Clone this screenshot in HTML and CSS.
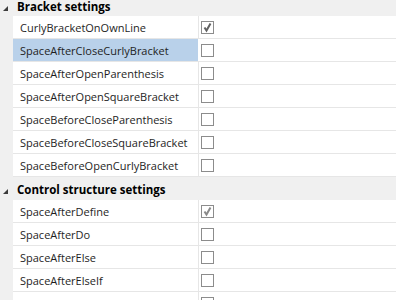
FILE: index.html
```html
<!DOCTYPE html>
<html lang="en">
<head>
    <meta charset="UTF-8">
    <title>Property grid</title>
    <link rel="stylesheet" href="styles.css">
</head>
<body>
    <div class="grid">
        <!-- Bracket settings -->
        <div class="category first">
            <svg class="expander" width="6" height="6" viewBox="0 0 6 6"><polygon points="0,6 6,6 6,0"/></svg>
            <span>Bracket settings</span>
        </div>
        <div class="row">
            <div class="name">CurlyBracketOnOwnLine</div>
            <div class="value"><span class="check on"><svg width="11" height="11" viewBox="0 0 11 11"><path d="M2.5 5.5 L4.5 8.5 L8.5 1.5"/></svg></span></div>
        </div>
        <div class="row selected">
            <div class="name">SpaceAfterCloseCurlyBracket</div>
            <div class="value"><span class="check"></span></div>
        </div>
        <div class="row">
            <div class="name">SpaceAfterOpenParenthesis</div>
            <div class="value"><span class="check"></span></div>
        </div>
        <div class="row">
            <div class="name">SpaceAfterOpenSquareBracket</div>
            <div class="value"><span class="check"></span></div>
        </div>
        <div class="row">
            <div class="name">SpaceBeforeCloseParenthesis</div>
            <div class="value"><span class="check"></span></div>
        </div>
        <div class="row">
            <div class="name">SpaceBeforeCloseSquareBracket</div>
            <div class="value"><span class="check"></span></div>
        </div>
        <div class="row">
            <div class="name">SpaceBeforeOpenCurlyBracket</div>
            <div class="value"><span class="check"></span></div>
        </div>

        <!-- Control structure settings -->
        <div class="category">
            <svg class="expander" width="6" height="6" viewBox="0 0 6 6"><polygon points="0,6 6,6 6,0"/></svg>
            <span>Control structure settings</span>
        </div>
        <div class="row">
            <div class="name">SpaceAfterDefine</div>
            <div class="value"><span class="check on light"><svg width="11" height="11" viewBox="0 0 11 11"><path d="M2.5 5.5 L4.5 8.5 L8.5 1.5"/></svg></span></div>
        </div>
        <div class="row">
            <div class="name">SpaceAfterDo</div>
            <div class="value"><span class="check"></span></div>
        </div>
        <div class="row">
            <div class="name">SpaceAfterElse</div>
            <div class="value"><span class="check"></span></div>
        </div>
        <div class="row">
            <div class="name">SpaceAfterElseIf</div>
            <div class="value"><span class="check"></span></div>
        </div>
        <div class="row">
            <div class="name">SpaceAfterFor</div>
            <div class="value"><span class="check"></span></div>
        </div>
    </div>
</body>
</html>
```

FILE: styles.css
```css
body {
    margin: 0;
    padding: 0;
    background: #ffffff;
    font-family: "Open Sans", "Noto Sans", sans-serif;
    font-size: 11px;
    color: #1e1e1e;
    overflow: hidden;
}
.grid {
    margin-top: -5px;
    background: #f0f0f0;
}
.category {
    display: flex;
    align-items: center;
    height: 23px;
    padding-top: 2px;
    box-sizing: border-box;
    background: #f0f0f0;
    font-size: 11.5px;
    font-weight: bold;
    color: #000;
}
.category.first {
    height: 21px;
}
.expander {
    margin-left: 3px;
    margin-right: 9px;
    margin-top: 3px;
    width: 5px;
    height: 5px;
    fill: #3c3c3c;
}
.row {
    display: grid;
    grid-template-columns: 186px 1fr;
    margin-left: 13px;
    height: 23px;
    background: #fff;
    border-bottom: 1px solid #e6e6e6;
    box-sizing: border-box;
}
.name {
    display: flex;
    align-items: center;
    padding-left: 7px;
    padding-top: 1px;
    border-right: 1px solid #e6e6e6;
    white-space: nowrap;
    overflow: hidden;
}
.selected .name {
    background: #b9d1ea;
    border-right-color: #fff;
}
.value {
    display: flex;
    align-items: center;
    padding-left: 2px;
}
.check {
    display: flex;
    align-items: center;
    justify-content: center;
    width: 13px;
    height: 13px;
    border: 1px solid #8c8c8c;
    box-sizing: border-box;
    background: #fff;
}
.check svg path {
    fill: none;
    stroke: #616161;
    stroke-width: 2;
}
.check.light svg path {
    stroke: #8a8a8a;
}
```
